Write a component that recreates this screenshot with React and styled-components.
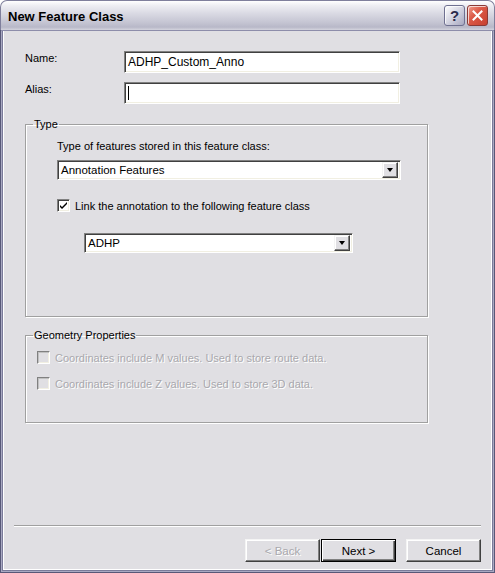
import React from 'react';
import styled, { createGlobalStyle } from 'styled-components';

const GlobalStyle = createGlobalStyle`
  html, body {
    margin: 0;
    padding: 0;
    background: #ffffff;
  }
  body {
    font-family: "Liberation Sans", Arial, sans-serif;
    font-size: 11px;
    color: #000;
  }
`;

const Window = styled.div`
  width: 495px;
  height: 573px;
  display: flex;
  flex-direction: column;
  box-sizing: border-box;
`;

const TitleBar = styled.div`
  height: 30px;
  flex: none;
  display: flex;
  align-items: center;
  padding: 0 6px 0 7px;
  border-radius: 7px 7px 0 0;
  border: 1px solid #7f7f9c;
  border-bottom: none;
  box-sizing: border-box;
  background: linear-gradient(
    #ffffff 0%,
    #eeeef3 15%,
    #d8d8e2 45%,
    #c4c4d2 75%,
    #b8b8c8 90%,
    #d4d4de 100%
  );
`;

const Title = styled.div`
  flex: 1;
  font-weight: bold;
  font-size: 13px;
  color: #000;
  margin-top: 1px;
`;

const TitleButtons = styled.div`
  display: flex;
  gap: 2px;
`;

const CaptionButton = styled.div`
  width: 21px;
  height: 21px;
  box-sizing: border-box;
  border-radius: 3px;
  display: flex;
  align-items: center;
  justify-content: center;
  border: 1px solid ${p => (p.$close ? '#8a3a36' : '#6f7090')};
  background: ${p =>
    p.$close
      ? 'linear-gradient(135deg, #f0a090 0%, #dc5a48 40%, #c7402f 100%)'
      : 'linear-gradient(135deg, #ffffff 0%, #d8d8e4 45%, #a8a8c0 100%)'};
  box-shadow: inset 1px 1px 0 rgba(255, 255, 255, 0.7);
  color: ${p => (p.$close ? '#fff' : '#2a2a4a')};
  font-weight: bold;
  font-size: 15px;
`;

const Body = styled.div`
  flex: 1;
  display: flex;
  flex-direction: column;
  background: #e0dfe3;
  border: 1px solid #585878;
  border-top: none;
  box-shadow: inset 1px 0 0 #a9a9c2, inset -1px 0 0 #a9a9c2, inset 0 -1px 0 #a9a9c2,
    inset 2px 0 0 #7b7b9a, inset -2px 0 0 #7b7b9a, inset 0 -2px 0 #7b7b9a,
    inset 3px 0 0 #ffffff, inset -3px 0 0 #ffffff, inset 0 -3px 0 #ffffff;
  padding: 0 3px 3px 3px;
`;

const TopEdge = styled.div`
  height: 1px;
  background: #8d8daa;
  margin: 0 -3px;
`;

const Main = styled.div`
  padding: 20px 0 0 21px;
  display: flex;
  flex-direction: column;
`;

const FieldRow = styled.div`
  display: flex;
  align-items: center;
  height: 22px;
  margin-bottom: 9px;
`;

const Label = styled.div`
  width: 99px;
  margin-top: -8px;
`;

const sunken = `
  box-sizing: border-box;
  background: #fff;
  border-top: 1px solid #808080;
  border-left: 1px solid #808080;
  border-bottom: 1px solid #ffffff;
  border-right: 1px solid #ffffff;
  box-shadow: inset 1px 1px 0 #404040, inset -1px -1px 0 #f1efe2;
`;

const TextBox = styled.div`
  ${sunken}
  width: ${p => p.$w}px;
  height: 22px;
  display: flex;
  align-items: center;
  padding-left: 3px;
  font-size: 12px;
`;

const Caret = styled.span`
  display: inline-block;
  width: 1px;
  height: 14px;
  background: #000;
`;

const Group = styled.fieldset`
  width: 403px;
  box-sizing: border-box;
  margin: 0;
  padding: 0;
  border: 1px solid #a0a0a0;
  box-shadow: 1px 1px 0 #ffffff, inset 1px 1px 0 #ffffff;
  height: ${p => p.$h}px;
  margin-top: ${p => p.$top}px;
`;

const Legend = styled.legend`
  padding: 0 1px;
  margin-left: 7px;
  font-size: 11px;
  line-height: 13px;
`;

const TypeContent = styled.div`
  padding: 9px 0 0 31px;
  display: flex;
  flex-direction: column;
`;

const Text = styled.div`
  color: ${p => (p.$disabled ? '#a9a8ad' : '#000')};
  text-shadow: ${p => (p.$disabled ? '1px 1px 0 #ffffff' : 'none')};
  font-size: 11px;
`;

const Select = styled.div`
  ${sunken}
  width: ${p => p.$w}px;
  height: 20px;
  display: flex;
  align-items: center;
  padding: 0 2px 0 3px;
  font-size: 11.5px;
  margin-left: ${p => p.$indent || 0}px;
  margin-top: ${p => p.$top}px;
`;

const SelectValue = styled.span`
  flex: 1;
`;

const raised = `
  box-sizing: border-box;
  background: #e0dfe3;
  border-top: 1px solid #f4f4f4;
  border-left: 1px solid #f4f4f4;
  border-bottom: 1px solid #404040;
  border-right: 1px solid #404040;
  box-shadow: inset -1px -1px 0 #808080, inset 1px 1px 0 #ffffff;
`;

const DropButton = styled.div`
  ${raised}
  width: 16px;
  height: 16px;
  display: flex;
  align-items: center;
  justify-content: center;
`;

const Arrow = styled.span`
  width: 0;
  height: 0;
  border-left: 3.5px solid transparent;
  border-right: 3.5px solid transparent;
  border-top: 4px solid #000;
`;

const CheckRow = styled.div`
  display: flex;
  align-items: center;
  gap: 5px;
  margin-top: ${p => p.$top}px;
`;

const CheckBox = styled.div`
  width: 13px;
  height: 13px;
  box-sizing: border-box;
  background: ${p => (p.$disabled ? '#e0dfe3' : '#fff')};
  border-top: 1px solid #808080;
  border-left: 1px solid #808080;
  border-bottom: 1px solid #ffffff;
  border-right: 1px solid #ffffff;
  box-shadow: ${p =>
    p.$disabled
      ? 'inset 1px 1px 0 #c0c0c0, inset -1px -1px 0 #f1efe2'
      : 'inset 1px 1px 0 #404040, inset -1px -1px 0 #f1efe2'};
  display: flex;
  align-items: center;
  justify-content: center;
`;

const GeoContent = styled.div`
  padding: 9px 0 0 11px;
  display: flex;
  flex-direction: column;
`;

const Footer = styled.div`
  margin-top: auto;
  padding: 0 10px 7px 7px;
  display: flex;
  flex-direction: column;
`;

const Separator = styled.div`
  height: 1px;
  background: #a0a0a0;
  border-bottom: 1px solid #ffffff;
  margin-left: 3px;
`;

const ButtonRow = styled.div`
  display: flex;
  justify-content: flex-end;
  margin-top: 12px;
`;

const Button = styled.div`
  ${raised}
  width: 75px;
  height: 23px;
  display: flex;
  align-items: center;
  justify-content: center;
  font-size: 11.5px;
  margin-left: ${p => p.$gap || 0}px;
  color: ${p => (p.$disabled ? '#a9a8ad' : '#000')};
  text-shadow: ${p => (p.$disabled ? '1px 1px 0 #ffffff' : 'none')};
  ${p =>
    p.$default &&
    `
    border: 1px solid #000;
    box-shadow: inset 1px 1px 0 #ffffff, inset -1px -1px 0 #404040, inset -2px -2px 0 #808080;
  `}
`;

function Check() {
  return (
    <svg width="9" height="9" viewBox="0 0 9 9">
      <path d="M1 4 L3 6 L8 1 L8 3 L3 8 L1 6 Z" fill="#000" />
    </svg>
  );
}

function CloseGlyph() {
  return (
    <svg width="11" height="11" viewBox="0 0 11 11">
      <path d="M1.5 1.5 L9.5 9.5 M9.5 1.5 L1.5 9.5" stroke="#fff" strokeWidth="2" strokeLinecap="square" />
    </svg>
  );
}

function Dropdown({ value, width, indent, top }) {
  return (
    <Select $w={width} $indent={indent} $top={top}>
      <SelectValue>{value}</SelectValue>
      <DropButton>
        <Arrow />
      </DropButton>
    </Select>
  );
}

export default function App() {
  return (
    <Window>
      <GlobalStyle />
      <TitleBar>
        <Title>New Feature Class</Title>
        <TitleButtons>
          <CaptionButton>?</CaptionButton>
          <CaptionButton $close>
            <CloseGlyph />
          </CaptionButton>
        </TitleButtons>
      </TitleBar>
      <Body>
        <TopEdge />
        <Main>
          <FieldRow>
            <Label>Name:</Label>
            <TextBox $w={276}>ADHP_Custom_Anno</TextBox>
          </FieldRow>
          <FieldRow>
            <Label>Alias:</Label>
            <TextBox $w={276}>
              <Caret />
            </TextBox>
          </FieldRow>

          <Group $h={199} $top={5}>
            <Legend>Type</Legend>
            <TypeContent>
              <Text>Type of features stored in this feature class:</Text>
              <Dropdown value="Annotation Features" width={344} top={8} />
              <CheckRow $top={19}>
                <CheckBox>
                  <Check />
                </CheckBox>
                <Text>Link the annotation to the following feature class</Text>
              </CheckRow>
              <Dropdown value="ADHP" width={269} indent={27} top={21} />
            </TypeContent>
          </Group>

          <Group $h={94} $top={12}>
            <Legend>Geometry Properties</Legend>
            <GeoContent>
              <CheckRow $top={0}>
                <CheckBox $disabled />
                <Text $disabled>Coordinates include M values. Used to store route data.</Text>
              </CheckRow>
              <CheckRow $top={13}>
                <CheckBox $disabled />
                <Text $disabled>Coordinates include Z values. Used to store 3D data.</Text>
              </CheckRow>
            </GeoContent>
          </Group>
        </Main>

        <Footer>
          <Separator />
          <ButtonRow>
            <Button $disabled>&lt; Back</Button>
            <Button $default $gap={1}>Next &gt;</Button>
            <Button $gap={10}>Cancel</Button>
          </ButtonRow>
        </Footer>
      </Body>
    </Window>
  );
}
